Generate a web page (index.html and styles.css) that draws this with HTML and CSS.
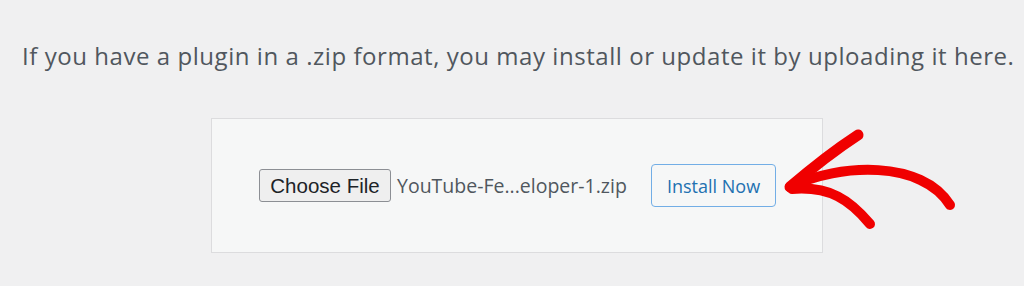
FILE: index.html
```html
<!DOCTYPE html>
<html>
<head>
<meta charset="utf-8">
<link rel="stylesheet" href="styles.css">
</head>
<body>
<div class="page">
  <p class="intro">If you have a plugin in a .zip format, you may install or update it by uploading it here.</p>
  <div class="upload">
    <form class="upload-form">
      <span class="file-btn">Choose File</span>
      <span class="file-name">YouTube-Fe...eloper-1.zip</span>
      <span class="install-btn">Install Now</span>
    </form>
  </div>
  <svg class="arrow" width="200" height="130" viewBox="770 115 200 130">
    <path d="M790 187 C 812 168, 835 150, 858 135" fill="none" stroke="#f00000" stroke-width="11" stroke-linecap="round"/>
    <path d="M790 187 C 840 163, 922 160, 950 205" fill="none" stroke="#f00000" stroke-width="10" stroke-linecap="round"/>
    <path d="M792 189 C 830 186, 850 200, 870 224" fill="none" stroke="#f00000" stroke-width="10" stroke-linecap="round"/>
  </svg>
</div>
</body>
</html>
```
FILE: styles.css
```css
html, body {
  margin: 0;
  padding: 0;
  background: #f0f0f1;
}
.page {
  position: relative;
  width: 1024px;
  height: 286px;
  overflow: hidden;
}
.intro {
  margin: 0;
  padding: 39px 0 0 22px;
  font-family: "Open Sans", sans-serif;
  font-size: 24px;
  letter-spacing: 0.55px;
  line-height: 34px;
  color: #50575e;
  white-space: nowrap;
}
.upload {
  margin: 45px 0 0 211px;
  width: 612px;
  height: 135px;
  box-sizing: border-box;
  border: 1px solid #dcdcde;
  background: #f6f7f7;
  display: flex;
  align-items: center;
}
.upload-form {
  display: flex;
  align-items: center;
  padding-left: 47px;
  margin: 0;
}
.file-btn {
  box-sizing: border-box;
  width: 132px;
  height: 33px;
  border: 1px solid #8c8f94;
  border-radius: 3px;
  background: #efefef;
  font-family: "Liberation Sans", Arial, sans-serif;
  font-size: 20.5px;
  color: #1d2327;
  display: flex;
  align-items: center;
  justify-content: center;
}
.file-name {
  margin-left: 6px;
  font-family: "Open Sans", sans-serif;
  font-size: 19.5px;
  color: #50575e;
  width: 254px;
}
.install-btn {
  box-sizing: border-box;
  width: 125px;
  height: 43px;
  border: 1px solid #72aee6;
  border-radius: 4px;
  background: #f6f7f7;
  font-family: "Open Sans", sans-serif;
  font-size: 18px;
  color: #2271b1;
  display: flex;
  align-items: center;
  justify-content: center;
}
.arrow {
  position: absolute;
  left: 770px;
  top: 115px;
}
```
